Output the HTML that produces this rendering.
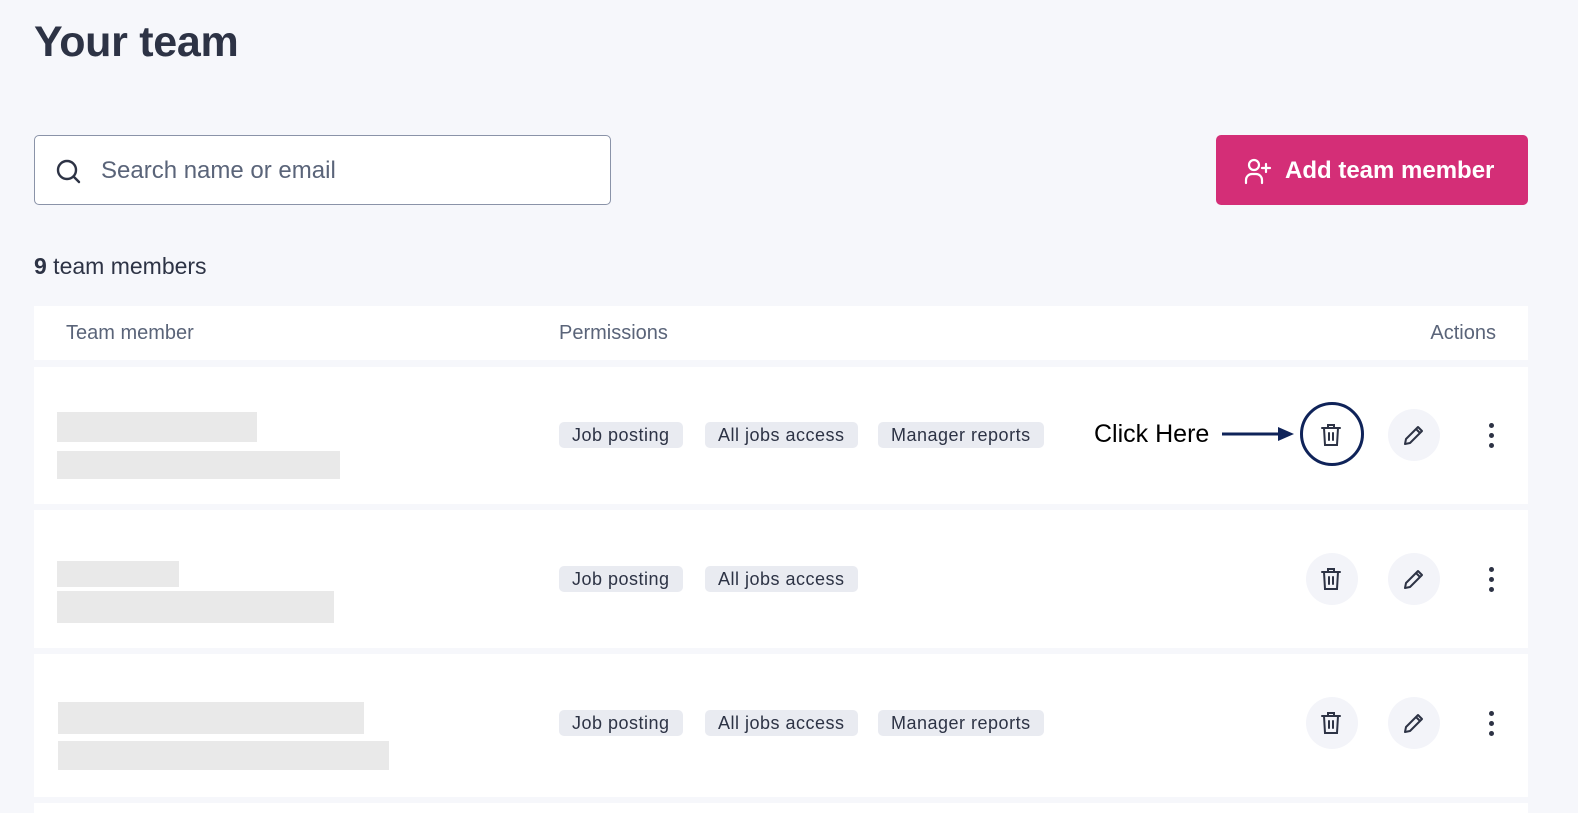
<!DOCTYPE html>
<html><head><meta charset="utf-8"><style>
body{margin:0;width:1578px;height:808px;background:#f6f7fb;font-family:"Liberation Sans",Arial,sans-serif;position:relative;overflow:hidden;color:#2d3345}
.abs{position:absolute}
h1{position:absolute;left:34px;top:18px;margin:0;font-size:43px;font-weight:bold;color:#2d3345;letter-spacing:-0.3px}
.search{left:34px;top:135px;width:577px;height:70px;border:1.5px solid #8a93a8;border-radius:5px;background:#fff;box-sizing:border-box}
.search span{position:absolute;left:66px;top:21px;font-size:24px;color:#5a6479}
.btn{left:1216px;top:135px;width:312px;height:70px;background:#d42e77;border-radius:5px;color:#fff;font-weight:bold;font-size:24px}
.card{left:34px;width:1494px;background:#fff}
.bar{background:#e9e9e9;position:absolute}
.tag{position:absolute;height:26px;background:#e9ebf1;border-radius:5px;font-size:18px;line-height:26px;padding:0 13px;color:#2d3345;box-sizing:border-box;letter-spacing:0.5px}
.circ{position:absolute;width:52px;height:52px;border-radius:50%;background:#f3f4f9}
.dots{position:absolute;width:5px}
.dots i{display:block;width:5px;height:5px;border-radius:50%;background:#2d3345;margin-bottom:5px}
</style></head><body>
<h1>Your team</h1>
<div class="abs search">
<svg class="abs" style="left:20px;top:22px" width="28" height="28" viewBox="0 0 28 28" fill="none" stroke="#2d3345" stroke-width="2.4"><circle cx="12" cy="12" r="9"/><path d="M19 19l5 5" stroke-linecap="round"/></svg>
<span>Search name or email</span></div>
<div class="abs btn">
<svg class="abs" style="left:28px;top:22px" width="28" height="28" viewBox="0 0 28 28" fill="none" stroke="#fff" stroke-width="2.2" stroke-linecap="round"><circle cx="10" cy="8" r="5"/><path d="M2 26v-3a6 6 0 0 1 6-6h4a6 6 0 0 1 6 6v3M22 7v8M18 11h8"/></svg>
<span class="abs" style="left:69px;top:22px">Add team member</span></div>
<div class="abs" style="left:34px;top:253px;font-size:23px"><b>9</b> team members</div>
<div class="abs card" style="top:306px;height:54px">
<span class="abs" style="left:32px;top:16px;font-size:20px;color:#5a6479">Team member</span>
<span class="abs" style="left:525px;top:16px;font-size:20px;color:#5a6479">Permissions</span>
<span class="abs" style="right:32px;top:16px;font-size:20px;color:#5a6479">Actions</span></div>

<div class="abs card" style="top:367px;height:137px"></div>
<div class="abs card" style="top:510px;height:138px"></div>
<div class="abs card" style="top:654px;height:143px"></div>
<div class="abs card" style="top:803px;height:10px"></div>

<div class="bar" style="left:57px;top:412px;width:200px;height:30px"></div>
<div class="bar" style="left:57px;top:451px;width:283px;height:28px"></div>
<div class="bar" style="left:57px;top:561px;width:122px;height:26px"></div>
<div class="bar" style="left:57px;top:591px;width:277px;height:32px"></div>
<div class="bar" style="left:58px;top:702px;width:306px;height:32px"></div>
<div class="bar" style="left:58px;top:741px;width:331px;height:29px"></div>

<div class="tag" style="left:559px;top:422px">Job posting</div>
<div class="tag" style="left:705px;top:422px">All jobs access</div>
<div class="tag" style="left:878px;top:422px">Manager reports</div>
<div class="tag" style="left:559px;top:566px">Job posting</div>
<div class="tag" style="left:705px;top:566px">All jobs access</div>
<div class="tag" style="left:559px;top:710px">Job posting</div>
<div class="tag" style="left:705px;top:710px">All jobs access</div>
<div class="tag" style="left:878px;top:710px">Manager reports</div>

<span class="abs" style="left:1094px;top:420px;font-size:25px;color:#000">Click Here</span>
<svg class="abs" style="left:1220px;top:424px" width="76" height="20"><path d="M2 10h60" stroke="#0f2359" stroke-width="3"/><path d="M58 3l16 7-16 7z" fill="#0f2359"/></svg>

<div class="abs" style="left:1300px;top:402px;width:58px;height:58px;border:3px solid #0f2359;border-radius:50%;background:#fff"></div>
<div class="circ" style="left:1306px;top:553px"></div>
<div class="circ" style="left:1306px;top:697px"></div>
<div class="circ" style="left:1388px;top:409px"></div>
<div class="circ" style="left:1388px;top:553px"></div>
<div class="circ" style="left:1388px;top:697px"></div>

<svg class="abs" style="left:1318px;top:422px" width="26" height="26" viewBox="0 0 26 26" fill="none" stroke="#2d3345" stroke-width="2" stroke-linecap="round"><path d="M4 6h18M10 6V3h6v3M6 6l1 17h12l1-17M11 11v7M15 11v7"/></svg>
<svg class="abs" style="left:1318px;top:566px" width="26" height="26" viewBox="0 0 26 26" fill="none" stroke="#2d3345" stroke-width="2" stroke-linecap="round"><path d="M4 6h18M10 6V3h6v3M6 6l1 17h12l1-17M11 11v7M15 11v7"/></svg>
<svg class="abs" style="left:1318px;top:710px" width="26" height="26" viewBox="0 0 26 26" fill="none" stroke="#2d3345" stroke-width="2" stroke-linecap="round"><path d="M4 6h18M10 6V3h6v3M6 6l1 17h12l1-17M11 11v7M15 11v7"/></svg>

<svg class="abs" style="left:1401px;top:422px" width="26" height="26" viewBox="0 0 26 26" fill="none" stroke="#2d3345" stroke-width="2" stroke-linejoin="round"><path d="M4 22l1-5L17 5l4 4L9 21z M15 7l4 4"/></svg>
<svg class="abs" style="left:1401px;top:566px" width="26" height="26" viewBox="0 0 26 26" fill="none" stroke="#2d3345" stroke-width="2" stroke-linejoin="round"><path d="M4 22l1-5L17 5l4 4L9 21z M15 7l4 4"/></svg>
<svg class="abs" style="left:1401px;top:710px" width="26" height="26" viewBox="0 0 26 26" fill="none" stroke="#2d3345" stroke-width="2" stroke-linejoin="round"><path d="M4 22l1-5L17 5l4 4L9 21z M15 7l4 4"/></svg>

<div class="dots" style="left:1489px;top:423px"><i></i><i></i><i></i></div>
<div class="dots" style="left:1489px;top:567px"><i></i><i></i><i></i></div>
<div class="dots" style="left:1489px;top:711px"><i></i><i></i><i></i></div>
</body></html>
